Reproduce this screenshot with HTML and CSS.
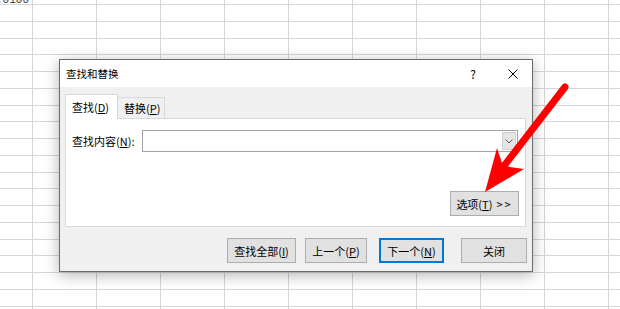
FILE: index.html
```html
<!DOCTYPE html>
<html lang="zh-CN">

<head>
    <meta charset="UTF-8">
    <title>查找和替换</title>
    <link rel="stylesheet" href="styles.css">
</head>

<body>
    <div class="sheet">
        <!-- cell A1, mostly scrolled off -->
        <div class="cell-top"><span>0.0100</span></div>

        <div class="dialog">
            <div class="titlebar">
                <span class="title">查找和替换</span>
                <span class="help">?</span>
                <span class="close">
                    <svg width="10" height="10" viewBox="0 0 10 10">
                        <path d="M0.5 0.5 L9.5 9.5 M9.5 0.5 L0.5 9.5" stroke="#000" stroke-width="1" fill="none" />
                    </svg>
                </span>
            </div>

            <div class="dialog-body">
                <div class="tabs">
                    <div class="tab active">查找(<u>D</u>)</div>
                    <div class="tab">替换(<u>P</u>)</div>
                </div>

                <div class="panel">
                    <div class="find-row">
                        <label class="find-label">查找内容(<u>N</u>):</label>
                        <div class="combo">
                            <div class="combo-btn">
                                <svg width="8" height="5" viewBox="0 0 8 5">
                                    <path d="M0.5 0.5 L4 4 L7.5 0.5" stroke="#606060" stroke-width="1" fill="none" />
                                </svg>
                            </div>
                        </div>
                    </div>
                    <div class="panel-foot">
                        <button class="btn options">选项(<u>T</u>) <span class="chev">&gt;&gt;</span></button>
                    </div>
                </div>

                <div class="actions">
                    <button class="btn find-all">查找全部(<u>I</u>)</button>
                    <button class="btn prev">上一个(<u>P</u>)</button>
                    <button class="btn next default">下一个(<u>N</u>)</button>
                    <button class="btn close-btn">关闭</button>
                </div>
            </div>
        </div>
    </div>

    <!-- red callout arrow drawn over the screenshot -->
    <svg class="arrow" width="620" height="309" viewBox="0 0 620 309">
        <line x1="565" y1="87" x2="504" y2="166" stroke="#ff0000" stroke-width="7" stroke-linecap="round" />
        <polygon points="485,192 497,148 503,166 524,169" fill="#ff0000" />
    </svg>
</body>

</html>
```

FILE: styles.css
```css
* {
    margin: 0;
    padding: 0;
    box-sizing: border-box;
}

body {
    width: 620px;
    height: 309px;
    overflow: hidden;
    position: relative;
    font-family: "Noto Sans CJK SC", "Microsoft YaHei", sans-serif;
    color: #000;
    background-color: #ffffff;
    /* spreadsheet grid */
    background-image:
        linear-gradient(to right, #d6d6d6 0 1px, transparent 1px),
        linear-gradient(to bottom,
            #d6d6d6 0 1px, transparent 1px 17px,
            #d6d6d6 17px 18px, transparent 18px 34px,
            #d6d6d6 34px 35px, transparent 35px 50px,
            #d6d6d6 50px 51px, transparent 51px);
    background-size: 64px 100%, 100% 67px;
    background-position: 32px 0, 0 4px;
}

.sheet {
    display: flex;
    flex-direction: column;
}

.cell-top {
    width: 32px;
    height: 4px;
    overflow: hidden;
    display: flex;
    align-items: flex-end;
    justify-content: flex-end;
    padding-right: 3px;
    font-family: "Liberation Mono", monospace;
    font-size: 11px;
    line-height: 8px;
    color: #333;
}

.dialog {
    width: 474px;
    height: 213px;
    margin: 55px 0 0 59px;
    border: 1px solid #6a6a6a;
    background-color: #f0f0f0;
    box-shadow: 0 3px 14px rgba(0, 0, 0, 0.3);
    display: flex;
    flex-direction: column;
}

.titlebar {
    height: 27px;
    background-color: #ffffff;
    display: flex;
    align-items: center;
    padding-left: 6px;
}

.title {
    flex: 1;
    font-size: 10.5px;
    line-height: 14px;
}

.help {
    width: 40px;
    text-align: center;
    font-size: 12px;
    line-height: 14px;
}

.close {
    width: 39px;
    display: flex;
    justify-content: center;
    align-items: center;
}

.dialog-body {
    flex: 1;
    padding: 7px 6px 8px 5px;
    display: flex;
    flex-direction: column;
    font-size: 11px;
}

u {
    text-underline-offset: 1px;
}

.tabs {
    height: 24px;
    display: flex;
    align-items: flex-end;
}

.tab {
    height: 21px;
    width: 47px;
    padding-left: 6px;
    display: flex;
    align-items: center;
    background-color: #f0f0f0;
    border: 1px solid #d9d9d9;
    border-left: none;
    border-bottom: none;
    line-height: 14px;
}

.tab.active {
    width: 53px;
    height: 25px;
    margin-bottom: -1px;
    padding-left: 6px;
    background-color: #ffffff;
    border-left: 1px solid #d9d9d9;
    position: relative;
    z-index: 1;
}

.panel {
    height: 109px;
    background-color: #ffffff;
    border: 1px solid #d9d9d9;
    padding: 11px 6px 10px 6px;
    display: flex;
    flex-direction: column;
    justify-content: space-between;
}

.find-row {
    height: 22px;
    display: flex;
    align-items: center;
}

.find-label {
    width: 70px;
    line-height: 14px;
}

.combo {
    flex: 1;
    height: 22px;
    border: 1px solid #a3a3a3;
    background-color: #ffffff;
    display: flex;
    justify-content: flex-end;
    margin-right: 1px;
}

.combo-btn {
    width: 14px;
    margin: 1px;
    background-color: #e5e5e5;
    border: 1px solid #cfcfcf;
    display: flex;
    align-items: center;
    justify-content: center;
}

.panel-foot {
    display: flex;
    justify-content: flex-end;
}

.btn {
    height: 25px;
    font-family: inherit;
    font-size: 11px;
    line-height: 14px;
    color: #000;
    background-color: #e1e1e1;
    border: 1px solid #adadad;
    display: flex;
    align-items: center;
    justify-content: center;
}

.btn.default {
    border: 2px solid #0078d7;
}

.options {
    width: 69px;
}

.chev {
    margin-left: 4px;
    letter-spacing: 2px;
}

.actions {
    margin-top: 11px;
    display: flex;
    justify-content: flex-end;
    margin-right: -1px;
}

.find-all {
    width: 69px;
}

.prev {
    width: 62px;
    margin-left: 9px;
}

.next {
    width: 65px;
    margin-left: 12px;
}

.close-btn {
    width: 66px;
    margin-left: 17px;
}

.arrow {
    position: absolute;
    top: 0;
    left: 0;
    pointer-events: none;
}
```
